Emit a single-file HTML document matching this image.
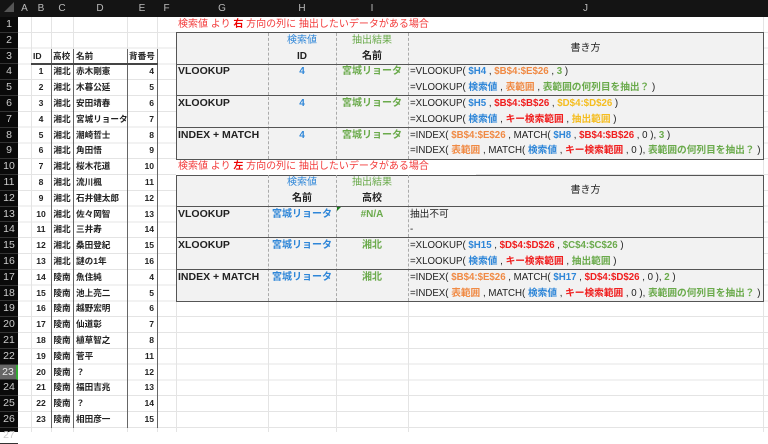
<!DOCTYPE html>
<html><head><meta charset="utf-8"><style>
*{margin:0;padding:0;box-sizing:border-box}
body{width:768px;height:432px;overflow:hidden;background:#fff;position:relative;font-family:"Liberation Sans","Noto Sans CJK JP",sans-serif;font-size:10px;color:#222}
.a{position:absolute}
.grid{position:absolute;left:18px;top:17px;width:750px;height:415px;background:repeating-linear-gradient(to bottom,transparent 0,transparent 14.8px,#e4e4e4 14.8px,#e4e4e4 15.8px)}
.vl{position:absolute;top:17px;height:415px;width:1px;background:#e4e4e4}
.ch{position:absolute;top:0;left:0;width:768px;height:17px;background:#141414}
.ch span{position:absolute;top:0;line-height:17px;color:#bbb;font-size:10px;text-align:center}
.rh{position:absolute;left:0;top:17px;width:18px;height:415px;background:#0a0a0a}
.rn{position:absolute;left:0;width:18px;height:15.8px;line-height:15.8px;text-align:center;color:#ccc;font-size:10.5px;border-bottom:1px solid #333}
.r{position:absolute;height:15.8px;line-height:15.8px;white-space:nowrap}
.c{text-align:center}
.b{font-weight:bold}
.bl{color:#2e86d8}.gr{color:#6aaa4b}.or{color:#f08a44}.rd{color:#f01d1d}.ye{color:#f5bd1f}
.tbl{position:absolute;left:176px;width:588px;background:#f2f2f2;border:1px solid #555}
.dv{position:absolute;width:0;border-left:1px dashed #aaa}
.hs{position:absolute;left:176px;width:588px;height:1px;background:#555}
.ld{position:absolute;width:1px;background:#666;top:48.6px;height:379px}
.f{font-size:9.7px}
.lt{position:absolute;left:0;top:0;font-size:8.6px}
.lab{font-size:10.5px}
</style></head><body>
<div class="grid"></div>
<div class="vl" style="left:31px"></div><div class="vl" style="left:51px"></div><div class="vl" style="left:73px"></div><div class="vl" style="left:127px"></div><div class="vl" style="left:157px"></div><div class="vl" style="left:176px"></div><div class="vl" style="left:268px"></div><div class="vl" style="left:336px"></div><div class="vl" style="left:408px"></div><div class="vl" style="left:763px"></div>

<div class="ch">
<span style="left:0;width:18px;color:#555">◢</span>
<span style="left:18px;width:13px">A</span><span style="left:31px;width:20px">B</span><span style="left:51px;width:22px">C</span><span style="left:73px;width:54px">D</span><span style="left:127px;width:30px">E</span><span style="left:157px;width:19px">F</span><span style="left:176px;width:92px">G</span><span style="left:268px;width:68px">H</span><span style="left:336px;width:72px">I</span><span style="left:408px;width:355px">J</span>
</div>
<div class="rh"></div>
<div class="rn" style="top:17px">1</div><div class="rn" style="top:32.8px">2</div><div class="rn" style="top:48.6px">3</div><div class="rn" style="top:64.4px">4</div><div class="rn" style="top:80.2px">5</div><div class="rn" style="top:96px">6</div><div class="rn" style="top:111.8px">7</div><div class="rn" style="top:127.6px">8</div><div class="rn" style="top:143.4px">9</div><div class="rn" style="top:159.2px">10</div><div class="rn" style="top:175px">11</div><div class="rn" style="top:190.8px">12</div><div class="rn" style="top:206.6px">13</div><div class="rn" style="top:222.4px">14</div><div class="rn" style="top:238.2px">15</div><div class="rn" style="top:254px">16</div><div class="rn" style="top:269.8px">17</div><div class="rn" style="top:285.6px">18</div><div class="rn" style="top:301.4px">19</div><div class="rn" style="top:317.2px">20</div><div class="rn" style="top:333px">21</div><div class="rn" style="top:348.8px">22</div><div class="rn" style="top:364.6px;background:#666;color:#eee;border-right:2px solid #3a3">23</div><div class="rn" style="top:380.4px">24</div><div class="rn" style="top:396.2px">25</div><div class="rn" style="top:412px">26</div><div class="rn" style="top:427.8px">27</div>

<!-- left table -->
<div class="ld" style="left:51px"></div><div class="ld" style="left:73px"></div><div class="ld" style="left:127px"></div><div class="ld" style="left:157px"></div>
<div class="a" style="left:31px;top:63.4px;width:127px;height:2px;background:#444"></div>
<div class="lt">
<div class="r b" style="top:48.6px;left:33px">ID</div><div class="r b" style="top:48.6px;left:53px">高校</div><div class="r b" style="top:48.6px;left:76px">名前</div><div class="r b" style="top:48.6px;left:129px">背番号</div>
<div class="r b c" style="left:31px;width:20px;top:64.4px">1</div><div class="r b c" style="left:51px;width:22px;top:64.4px">湘北</div><div class="r b" style="left:76px;top:64.4px">赤木剛憲</div><div class="r b" style="left:127px;width:27px;text-align:right;top:64.4px">4</div>
<div class="r b c" style="left:31px;width:20px;top:80.2px">2</div><div class="r b c" style="left:51px;width:22px;top:80.2px">湘北</div><div class="r b" style="left:76px;top:80.2px">木暮公延</div><div class="r b" style="left:127px;width:27px;text-align:right;top:80.2px">5</div>
<div class="r b c" style="left:31px;width:20px;top:96px">3</div><div class="r b c" style="left:51px;width:22px;top:96px">湘北</div><div class="r b" style="left:76px;top:96px">安田靖春</div><div class="r b" style="left:127px;width:27px;text-align:right;top:96px">6</div>
<div class="r b c" style="left:31px;width:20px;top:111.8px">4</div><div class="r b c" style="left:51px;width:22px;top:111.8px">湘北</div><div class="r b" style="left:76px;top:111.8px">宮城リョータ</div><div class="r b" style="left:127px;width:27px;text-align:right;top:111.8px">7</div>
<div class="r b c" style="left:31px;width:20px;top:127.6px">5</div><div class="r b c" style="left:51px;width:22px;top:127.6px">湘北</div><div class="r b" style="left:76px;top:127.6px">潮崎哲士</div><div class="r b" style="left:127px;width:27px;text-align:right;top:127.6px">8</div>
<div class="r b c" style="left:31px;width:20px;top:143.4px">6</div><div class="r b c" style="left:51px;width:22px;top:143.4px">湘北</div><div class="r b" style="left:76px;top:143.4px">角田悟</div><div class="r b" style="left:127px;width:27px;text-align:right;top:143.4px">9</div>
<div class="r b c" style="left:31px;width:20px;top:159.2px">7</div><div class="r b c" style="left:51px;width:22px;top:159.2px">湘北</div><div class="r b" style="left:76px;top:159.2px">桜木花道</div><div class="r b" style="left:127px;width:27px;text-align:right;top:159.2px">10</div>
<div class="r b c" style="left:31px;width:20px;top:175px">8</div><div class="r b c" style="left:51px;width:22px;top:175px">湘北</div><div class="r b" style="left:76px;top:175px">流川楓</div><div class="r b" style="left:127px;width:27px;text-align:right;top:175px">11</div>
<div class="r b c" style="left:31px;width:20px;top:190.8px">9</div><div class="r b c" style="left:51px;width:22px;top:190.8px">湘北</div><div class="r b" style="left:76px;top:190.8px">石井健太郎</div><div class="r b" style="left:127px;width:27px;text-align:right;top:190.8px">12</div>
<div class="r b c" style="left:31px;width:20px;top:206.6px">10</div><div class="r b c" style="left:51px;width:22px;top:206.6px">湘北</div><div class="r b" style="left:76px;top:206.6px">佐々岡智</div><div class="r b" style="left:127px;width:27px;text-align:right;top:206.6px">13</div>
<div class="r b c" style="left:31px;width:20px;top:222.4px">11</div><div class="r b c" style="left:51px;width:22px;top:222.4px">湘北</div><div class="r b" style="left:76px;top:222.4px">三井寿</div><div class="r b" style="left:127px;width:27px;text-align:right;top:222.4px">14</div>
<div class="r b c" style="left:31px;width:20px;top:238.2px">12</div><div class="r b c" style="left:51px;width:22px;top:238.2px">湘北</div><div class="r b" style="left:76px;top:238.2px">桑田登紀</div><div class="r b" style="left:127px;width:27px;text-align:right;top:238.2px">15</div>
<div class="r b c" style="left:31px;width:20px;top:254px">13</div><div class="r b c" style="left:51px;width:22px;top:254px">湘北</div><div class="r b" style="left:76px;top:254px">謎の1年</div><div class="r b" style="left:127px;width:27px;text-align:right;top:254px">16</div>
<div class="r b c" style="left:31px;width:20px;top:269.8px">14</div><div class="r b c" style="left:51px;width:22px;top:269.8px">陵南</div><div class="r b" style="left:76px;top:269.8px">魚住純</div><div class="r b" style="left:127px;width:27px;text-align:right;top:269.8px">4</div>
<div class="r b c" style="left:31px;width:20px;top:285.6px">15</div><div class="r b c" style="left:51px;width:22px;top:285.6px">陵南</div><div class="r b" style="left:76px;top:285.6px">池上亮二</div><div class="r b" style="left:127px;width:27px;text-align:right;top:285.6px">5</div>
<div class="r b c" style="left:31px;width:20px;top:301.4px">16</div><div class="r b c" style="left:51px;width:22px;top:301.4px">陵南</div><div class="r b" style="left:76px;top:301.4px">越野宏明</div><div class="r b" style="left:127px;width:27px;text-align:right;top:301.4px">6</div>
<div class="r b c" style="left:31px;width:20px;top:317.2px">17</div><div class="r b c" style="left:51px;width:22px;top:317.2px">陵南</div><div class="r b" style="left:76px;top:317.2px">仙道彰</div><div class="r b" style="left:127px;width:27px;text-align:right;top:317.2px">7</div>
<div class="r b c" style="left:31px;width:20px;top:333px">18</div><div class="r b c" style="left:51px;width:22px;top:333px">陵南</div><div class="r b" style="left:76px;top:333px">植草智之</div><div class="r b" style="left:127px;width:27px;text-align:right;top:333px">8</div>
<div class="r b c" style="left:31px;width:20px;top:348.8px">19</div><div class="r b c" style="left:51px;width:22px;top:348.8px">陵南</div><div class="r b" style="left:76px;top:348.8px">菅平</div><div class="r b" style="left:127px;width:27px;text-align:right;top:348.8px">11</div>
<div class="r b c" style="left:31px;width:20px;top:364.6px">20</div><div class="r b c" style="left:51px;width:22px;top:364.6px">陵南</div><div class="r b" style="left:76px;top:364.6px">？</div><div class="r b" style="left:127px;width:27px;text-align:right;top:364.6px">12</div>
<div class="r b c" style="left:31px;width:20px;top:380.4px">21</div><div class="r b c" style="left:51px;width:22px;top:380.4px">陵南</div><div class="r b" style="left:76px;top:380.4px">福田吉兆</div><div class="r b" style="left:127px;width:27px;text-align:right;top:380.4px">13</div>
<div class="r b c" style="left:31px;width:20px;top:396.2px">22</div><div class="r b c" style="left:51px;width:22px;top:396.2px">陵南</div><div class="r b" style="left:76px;top:396.2px">？</div><div class="r b" style="left:127px;width:27px;text-align:right;top:396.2px">14</div>
<div class="r b c" style="left:31px;width:20px;top:412px">23</div><div class="r b c" style="left:51px;width:22px;top:412px">陵南</div><div class="r b" style="left:76px;top:412px">相田彦一</div><div class="r b" style="left:127px;width:27px;text-align:right;top:412px">15</div>
</div>

<!-- top table -->
<div class="a" style="left:176px;top:17px;width:300px;height:15.8px;background:#fff"></div>
<div class="r" style="top:17px;left:178px;color:#f23a3a">検索値 より <b style="color:#e00">右</b> 方向の列に 抽出したいデータがある場合</div>
<div class="tbl" style="top:32.3px;height:127.4px"></div>
<div class="dv" style="left:268px;top:33px;height:126px"></div><div class="dv" style="left:336px;top:33px;height:126px"></div><div class="dv" style="left:408px;top:33px;height:126px"></div>
<div class="hs" style="top:63.6px"></div><div class="hs" style="top:95.2px"></div><div class="hs" style="top:126.8px"></div>
<div class="r c bl" style="top:32.8px;left:268px;width:68px">検索値</div>
<div class="r c gr" style="top:32.8px;left:336px;width:72px">抽出結果</div>
<div class="r c" style="top:40.7px;left:408px;width:355px">書き方</div>
<div class="r c b" style="top:48.6px;left:268px;width:68px">ID</div>
<div class="r c b" style="top:48.6px;left:336px;width:72px">名前</div>
<div class="r b lab" style="top:64.4px;left:178px">VLOOKUP</div>
<div class="r b lab" style="top:96px;left:178px">XLOOKUP</div>
<div class="r b lab" style="top:127.6px;left:178px">INDEX + MATCH</div>
<div class="r c b bl" style="top:64.4px;left:268px;width:68px">4</div><div class="r c b bl" style="top:96px;left:268px;width:68px">4</div><div class="r c b bl" style="top:127.6px;left:268px;width:68px">4</div>
<div class="r c gr b" style="top:64.4px;left:336px;width:72px">宮城リョータ</div><div class="r c gr b" style="top:96px;left:336px;width:72px">宮城リョータ</div><div class="r c gr b" style="top:127.6px;left:336px;width:72px">宮城リョータ</div>
<div class="r f" style="top:64.4px;left:410px">=VLOOKUP( <b class="bl">$H4</b> , <b class="or">$B$4:$E$26</b> , <b class="gr">3</b> )</div>
<div class="r f" style="top:80.2px;left:410px">=VLOOKUP( <b class="bl">検索値</b> , <b class="or">表範囲</b> , <b class="gr">表範囲の何列目を抽出？</b> )</div>
<div class="r f" style="top:96px;left:410px">=XLOOKUP( <b class="bl">$H5</b> , <b class="rd">$B$4:$B$26</b> , <b class="ye">$D$4:$D$26</b> )</div>
<div class="r f" style="top:111.8px;left:410px">=XLOOKUP( <b class="bl">検索値</b> , <b class="rd">キー検索範囲</b> , <b class="ye">抽出範囲</b> )</div>
<div class="r f" style="top:127.6px;left:410px">=INDEX( <b class="or">$B$4:$E$26</b> , MATCH( <b class="bl">$H8</b> , <b class="rd">$B$4:$B$26</b> , 0 ), <b class="gr">3</b> )</div>
<div class="r f" style="top:143.4px;left:410px">=INDEX( <b class="or">表範囲</b> , MATCH( <b class="bl">検索値</b> , <b class="rd">キー検索範囲</b> , 0 ), <b class="gr">表範囲の何列目を抽出？</b> )</div>

<!-- bottom table -->
<div class="a" style="left:176px;top:160px;width:300px;height:14.5px;background:#fff"></div>
<div class="r" style="top:159.2px;left:178px;color:#f23a3a">検索値 より <b style="color:#e00">左</b> 方向の列に 抽出したいデータがある場合</div>
<div class="tbl" style="top:174.5px;height:127.4px"></div>
<div class="dv" style="left:268px;top:175px;height:126px"></div><div class="dv" style="left:336px;top:175px;height:126px"></div><div class="dv" style="left:408px;top:175px;height:126px"></div>
<div class="hs" style="top:205.8px"></div><div class="hs" style="top:237.4px"></div><div class="hs" style="top:269px"></div>
<div class="r c bl" style="top:175px;left:268px;width:68px">検索値</div>
<div class="r c gr" style="top:175px;left:336px;width:72px">抽出結果</div>
<div class="r c" style="top:182.9px;left:408px;width:355px">書き方</div>
<div class="r c b" style="top:190.8px;left:268px;width:68px">名前</div>
<div class="r c b" style="top:190.8px;left:336px;width:72px">高校</div>
<div class="r b lab" style="top:206.6px;left:178px">VLOOKUP</div>
<div class="r b lab" style="top:238.2px;left:178px">XLOOKUP</div>
<div class="r b lab" style="top:269.8px;left:178px">INDEX + MATCH</div>
<div class="r c b bl" style="top:206.6px;left:268px;width:68px">宮城リョータ</div><div class="r c b bl" style="top:238.2px;left:268px;width:68px">宮城リョータ</div><div class="r c b bl" style="top:269.8px;left:268px;width:68px">宮城リョータ</div>
<div class="a" style="left:337px;top:207px;width:0;height:0;border-top:4px solid #1a7a1a;border-right:4px solid transparent"></div>
<div class="r c gr b" style="top:206.6px;left:336px;width:72px">#N/A</div><div class="r c gr b" style="top:238.2px;left:336px;width:72px">湘北</div><div class="r c gr b" style="top:269.8px;left:336px;width:72px">湘北</div>
<div class="r f" style="top:206.6px;left:410px">抽出不可</div>
<div class="r f" style="top:222.4px;left:410px">-</div>
<div class="r f" style="top:238.2px;left:410px">=XLOOKUP( <b class="bl">$H15</b> , <b class="rd">$D$4:$D$26</b> , <b class="gr">$C$4:$C$26</b> )</div>
<div class="r f" style="top:254px;left:410px">=XLOOKUP( <b class="bl">検索値</b> , <b class="rd">キー検索範囲</b> , <b class="gr">抽出範囲</b> )</div>
<div class="r f" style="top:269.8px;left:410px">=INDEX( <b class="or">$B$4:$E$26</b> , MATCH( <b class="bl">$H17</b> , <b class="rd">$D$4:$D$26</b> , 0 ), <b class="gr">2</b> )</div>
<div class="r f" style="top:285.6px;left:410px">=INDEX( <b class="or">表範囲</b> , MATCH( <b class="bl">検索値</b> , <b class="rd">キー検索範囲</b> , 0 ), <b class="gr">表範囲の何列目を抽出？</b> )</div>
</body></html>
